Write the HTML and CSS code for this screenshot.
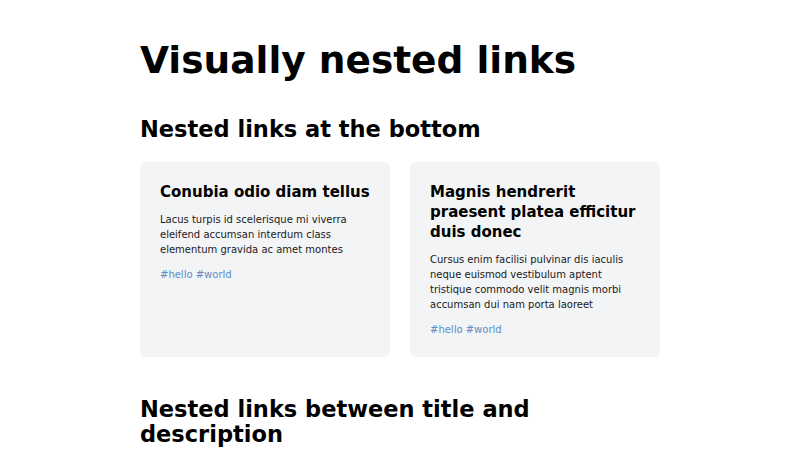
FILE: index.html
```html
<!DOCTYPE html>
<html lang="en">
<head>
<meta charset="utf-8">
<title>Visually nested links</title>
<link rel="stylesheet" href="styles.css">
</head>
<body>
<main class="page">
  <h1 class="title">Visually nested links</h1>

  <section class="section">
    <h2 class="section-title">Nested links at the bottom</h2>
    <div class="cards">
      <article class="card">
        <h3 class="card-title">Conubia odio diam tellus</h3>
        <p class="card-desc">Lacus turpis id scelerisque mi viverra eleifend accumsan interdum class elementum gravida ac amet montes</p>
        <p class="card-tags"><a href="#">#hello</a> <a href="#">#world</a></p>
      </article>
      <article class="card">
        <h3 class="card-title">Magnis hendrerit praesent platea efficitur duis donec</h3>
        <p class="card-desc">Cursus enim facilisi pulvinar dis iaculis neque euismod vestibulum aptent tristique commodo velit magnis morbi accumsan dui nam porta laoreet</p>
        <p class="card-tags"><a href="#">#hello</a> <a href="#">#world</a></p>
      </article>
    </div>
  </section>

  <section class="section">
    <h2 class="section-title">Nested links between title and description</h2>
  </section>
</main>
</body>
</html>
```

FILE: styles.css
```css
html, body {
  margin: 0;
  padding: 0;
  background: #ffffff;
}
body {
  font-family: "DejaVu Sans", sans-serif;
  color: #000;
}
.page {
  width: 520px;
  margin: 0 auto;
  padding-top: 36px;
}
.title {
  font-size: 37.5px;
  line-height: 48px;
  font-weight: bold;
  margin: 0 0 33px;
}
.section {
  margin-bottom: 40px;
}
.section-title {
  font-size: 22.5px;
  line-height: 25px;
  font-weight: bold;
  margin: 0 0 20px;
}
.cards {
  display: grid;
  grid-template-columns: 1fr 1fr;
  gap: 20px;
}
.card {
  background: #f3f4f6;
  border-radius: 6px;
  padding: 20px;
}
.card-title {
  font-size: 15px;
  line-height: 20px;
  font-weight: bold;
  margin: 0 0 10px;
}
.card-desc {
  font-size: 10px;
  line-height: 15px;
  margin: 0 0 10px;
  color: #1a1a1a;
}
.card-tags {
  font-size: 10px;
  line-height: 15px;
  margin: 0;
}
.card-tags a {
  color: #5a8cc8;
  text-decoration: none;
}
```
